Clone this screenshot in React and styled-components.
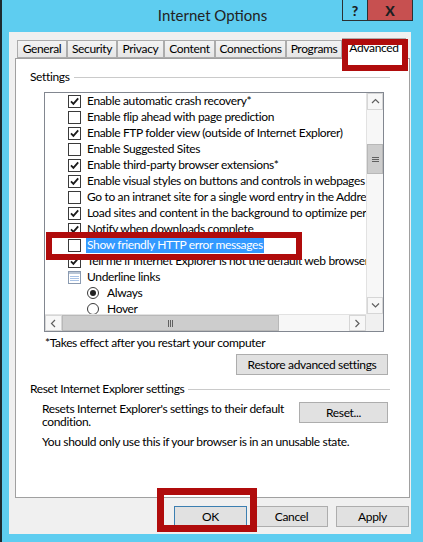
import styled, { createGlobalStyle } from "styled-components";

const FRAME_BLUE = "#5ecdf0";
const MARK_RED = "#b00c0c";
const UI_FONT = `Lato, "Liberation Sans", sans-serif`;

const GlobalStyle = createGlobalStyle`
  * {
    box-sizing: border-box;
  }

  html,
  body {
    margin: 0;
    padding: 0;
    background: ${FRAME_BLUE};
  }

  body {
    font-family: ${UI_FONT};
    font-size: 12px;
    letter-spacing: -0.35px;
    color: #000;
  }
`;

const Frame = styled.div`
  width: 423px;
  height: 542px;
  display: flex;
  flex-direction: column;
  background: ${FRAME_BLUE};
  border-left: 2px solid #1d2a30;
  overflow: hidden;
`;

const TitleBar = styled.div`
  flex: none;
  height: 32px;
  display: grid;
  grid-template-columns: 1fr auto 1fr;
`;

const Title = styled.div`
  grid-column: 2;
  align-self: center;
  margin-top: -2px;
  font-size: 15px;
  line-height: 20px;
  letter-spacing: 0;
  color: #222;
`;

const Caption = styled.div`
  grid-column: 3;
  justify-self: end;
  align-self: start;
  display: flex;
  height: 21px;
  margin-right: 10px;
  border: 1px solid #2b3033;
  border-top: 0;
`;

const CaptionButton = styled.div`
  width: ${(p) => p.$width}px;
  display: grid;
  place-items: center;
  background: ${(p) => p.$bg};
  font-weight: 900;
  font-size: 14px;
  letter-spacing: 0;
  color: #1b1f22;

  & + & {
    border-left: 1px solid #2b3033;
  }
`;

const Client = styled.div`
  flex: none;
  width: 402px;
  height: 502px;
  margin-left: 7px;
  padding: 6px 2px 0 6px;
  display: flex;
  flex-direction: column;
  background: #f0f0f0;
`;

const TabStrip = styled.div`
  position: relative;
  z-index: 1;
  height: 20px;
  padding-left: 2px;
  display: flex;
  align-items: flex-end;
`;

const Tab = styled.div`
  position: relative;
  flex: none;
  width: ${(p) => p.$width}px;
  height: ${(p) => (p.$active ? 21 : 18)}px;
  margin-bottom: ${(p) => (p.$active ? -1 : 0)}px;
  border: 1px solid #acacac;
  border-bottom: ${(p) => (p.$active ? "0" : "1px solid #acacac")};
  background: ${(p) => (p.$active ? "#fff" : "linear-gradient(#f3f3f3, #e6e6e6)")};
  text-align: center;
  line-height: ${(p) => (p.$active ? 18 : 16)}px;
  white-space: nowrap;
`;

const Marker = styled.span`
  position: absolute;
  z-index: 3;
  left: ${(p) => p.$left}px;
  top: ${(p) => p.$top}px;
  width: ${(p) => p.$w}px;
  height: ${(p) => p.$h}px;
  border: ${(p) => p.$thick}px solid ${MARK_RED};
  pointer-events: none;
`;

const Panel = styled.div`
  flex: none;
  width: 395px;
  height: 440px;
  padding: 10px 19px 0 14px;
  display: flex;
  flex-direction: column;
  background: #fff;
  border: 1px solid #a0a0a0;
`;

const GroupHeader = styled.div`
  display: flex;
  align-items: center;
  gap: 4px;
  height: 16px;
  margin-top: ${(p) => p.$gap || 0}px;
  line-height: 16px;

  &::after {
    content: "";
    flex: 1;
    height: 1px;
    background: #cacaca;
  }
`;

const ListBox = styled.div`
  width: 340px;
  height: 240px;
  margin: 7px 0 0 14px;
  display: grid;
  grid-template-columns: 1fr 17px;
  grid-template-rows: 1fr 17px;
  border: 1px solid #828790;
  overflow: hidden;
`;

const ListContent = styled.div`
  position: relative;
  overflow: hidden;
  background: #fff;
`;

const Row = styled.div`
  position: relative;
  display: flex;
  align-items: center;
  gap: ${(p) => p.$gap}px;
  height: 16px;
  padding-left: ${(p) => p.$indent}px;
  white-space: nowrap;
`;

const RowLabel = styled.span`
  padding: 0 1px;
  line-height: 16px;
  background: ${(p) => (p.$selected ? "#3399ff" : "transparent")};
  color: ${(p) => (p.$selected ? "#fff" : "#000")};
`;

const Box = styled.span`
  flex: none;
  width: 13px;
  height: 13px;
  display: grid;
  place-items: center;
  border: 1px solid #3a3a3a;
  background: #fff;
`;

const Radio = styled.span`
  flex: none;
  width: 12px;
  height: 12px;
  display: grid;
  place-items: center;
  border: 1px solid #3a3a3a;
  border-radius: 50%;
  background: #fff;

  &::after {
    content: "";
    width: 6px;
    height: 6px;
    border-radius: 50%;
    background: ${(p) => (p.$on ? "#222" : "transparent")};
  }
`;

const VScroll = styled.div`
  display: flex;
  flex-direction: column;
  background: #f7f7f7;
  border-left: 1px solid #e2e2e2;
`;

const HScroll = styled.div`
  display: flex;
  background: #f7f7f7;
  border-top: 1px solid #e2e2e2;
`;

const ArrowButton = styled.div`
  flex: none;
  width: ${(p) => (p.$horizontal ? "17px" : "auto")};
  height: ${(p) => (p.$horizontal ? "auto" : "17px")};
  margin-top: ${(p) => (p.$end && !p.$horizontal ? "auto" : "0")};
  margin-left: ${(p) => (p.$end && p.$horizontal ? "auto" : "0")};
  display: grid;
  place-items: center;
  border: 1px solid #d6d6d6;
  background: #f7f7f7;
`;

const Thumb = styled.div`
  flex: none;
  display: grid;
  place-items: center;
  background: #cdcdcd;
  border: 1px solid #b8b8b8;
  ${(p) =>
    p.$horizontal
      ? `width: ${p.$size}px; margin: 0;`
      : `height: ${p.$size}px; margin: ${p.$offset}px 0 0;`}
`;

const Corner = styled.div`
  background: #f0f0f0;
`;

const Note = styled.div`
  margin: 3px 0 0 15px;
  line-height: 16px;
`;

const Button = styled.div`
  position: relative;
  flex: none;
  width: ${(p) => p.$width}px;
  height: 21px;
  display: grid;
  place-items: center;
  background: #e1e1e1;
  border: 1px solid ${(p) => (p.$default ? "#3c7fb1" : "#adadad")};
  line-height: 16px;
`;

const RestoreButton = styled(Button)`
  align-self: flex-end;
  margin: 3px 2px 0 0;
`;

const ResetRow = styled.div`
  display: flex;
  justify-content: space-between;
  align-items: flex-start;
  margin: 4px 2px 0 12px;
`;

const Description = styled.div`
  line-height: 13px;
  padding-top: 1px;
  white-space: nowrap;
`;

const ResetButton = styled(Button)`
  margin-top: 1px;
`;

const Warning = styled.div`
  margin: 7px 0 0 12px;
  line-height: 14px;
`;

const ButtonRow = styled.div`
  display: flex;
  justify-content: flex-end;
  gap: 8px;
  margin-top: 8px;
`;

const settings = [
  { kind: "check", on: true, text: "Enable automatic crash recovery*" },
  { kind: "check", on: false, text: "Enable flip ahead with page prediction" },
  { kind: "check", on: true, text: "Enable FTP folder view (outside of Internet Explorer)" },
  { kind: "check", on: false, text: "Enable Suggested Sites" },
  { kind: "check", on: true, text: "Enable third-party browser extensions*" },
  { kind: "check", on: true, text: "Enable visual styles on buttons and controls in webpages" },
  { kind: "check", on: false, text: "Go to an intranet site for a single word entry in the Address bar" },
  { kind: "check", on: true, text: "Load sites and content in the background to optimize performance" },
  { kind: "check", on: true, text: "Notify when downloads complete" },
  { kind: "check", on: false, text: "Show friendly HTTP error messages", selected: true },
  { kind: "check", on: true, text: "Tell me if Internet Explorer is not the default web browser" },
  { kind: "group", text: "Underline links" },
  { kind: "radio", on: true, text: "Always" },
  { kind: "radio", on: false, text: "Hover" },
];

const tabs = [
  { label: "General", width: 50 },
  { label: "Security", width: 50 },
  { label: "Privacy", width: 47 },
  { label: "Content", width: 51 },
  { label: "Connections", width: 71 },
  { label: "Programs", width: 56 },
  { label: "Advanced", width: 64, active: true },
];

function CheckMark() {
  return (
    <svg width="11" height="11" viewBox="0 0 11 11">
      <path d="M2 5.4 4.4 7.9 9.2 2.4" fill="none" stroke="#1a1a1a" strokeWidth="1.8" />
    </svg>
  );
}

function GroupIcon() {
  return (
    <svg width="13" height="13" viewBox="0 0 13 13" style={{ flex: "none" }}>
      <rect x="0.5" y="0.5" width="12" height="12" fill="#fff" stroke="#8a9ab0" />
      <rect x="1" y="1" width="11" height="2" fill="#b9c6d6" />
      <path d="M2 5.5h9M2 7.5h9M2 9.5h9" stroke="#a9c3e6" />
    </svg>
  );
}

function Chevron({ dir }) {
  const paths = {
    up: "M1 5 4.5 1.5 8 5",
    down: "M1 1.5 4.5 5 8 1.5",
    left: "M5 1 1.5 4.5 5 8",
    right: "M1.5 1 5 4.5 1.5 8",
  };
  const vertical = dir === "up" || dir === "down";
  return (
    <svg width={vertical ? 9 : 7} height={vertical ? 7 : 9} viewBox={vertical ? "0 0 9 7" : "0 0 7 9"}>
      <path d={paths[dir]} fill="none" stroke="#5f5f5f" strokeWidth="1.2" />
    </svg>
  );
}

function Grip({ horizontal }) {
  return horizontal ? (
    <svg width="7" height="7" viewBox="0 0 7 7">
      <path d="M1.5 0v7M3.5 0v7M5.5 0v7" stroke="#606060" />
    </svg>
  ) : (
    <svg width="7" height="7" viewBox="0 0 7 7">
      <path d="M0 1.5h7M0 3.5h7M0 5.5h7" stroke="#606060" />
    </svg>
  );
}

function SettingRow({ item }) {
  if (item.kind === "radio") {
    return (
      <Row $indent={42} $gap={7}>
        <Radio $on={item.on} />
        <RowLabel>{item.text}</RowLabel>
      </Row>
    );
  }

  return (
    <Row $indent={23} $gap={5}>
      {item.kind === "group" ? <GroupIcon /> : <Box>{item.on ? <CheckMark /> : null}</Box>}
      <RowLabel $selected={item.selected}>{item.text}</RowLabel>
      {item.selected ? <Marker $left={1} $top={-5} $w={256} $h={28} $thick={6} /> : null}
    </Row>
  );
}

export default function App() {
  return (
    <>
      <GlobalStyle />
      <Frame>
        <TitleBar>
          <Title>Internet Options</Title>
          <Caption>
            <CaptionButton $width={24} $bg={FRAME_BLUE}>?</CaptionButton>
            <CaptionButton $width={45} $bg="#c75050">X</CaptionButton>
          </Caption>
        </TitleBar>

        <Client>
          <TabStrip>
            {tabs.map((tab) => (
              <Tab key={tab.label} $width={tab.width} $active={tab.active}>
                {tab.label}
                {tab.active ? <Marker $left={-1} $top={0} $w={66} $h={32} $thick={6} /> : null}
              </Tab>
            ))}
          </TabStrip>

          <Panel>
            <GroupHeader>Settings</GroupHeader>

            <ListBox>
              <ListContent>
                {settings.map((item) => (
                  <SettingRow key={item.text} item={item} />
                ))}
              </ListContent>
              <VScroll>
                <ArrowButton>
                  <Chevron dir="up" />
                </ArrowButton>
                <Thumb $size={30} $offset={34}>
                  <Grip />
                </Thumb>
                <ArrowButton $end>
                  <Chevron dir="down" />
                </ArrowButton>
              </VScroll>
              <HScroll>
                <ArrowButton $horizontal>
                  <Chevron dir="left" />
                </ArrowButton>
                <Thumb $horizontal $size={217}>
                  <Grip horizontal />
                </Thumb>
                <ArrowButton $horizontal $end>
                  <Chevron dir="right" />
                </ArrowButton>
              </HScroll>
              <Corner />
            </ListBox>

            <Note>*Takes effect after you restart your computer</Note>
            <RestoreButton $width={152}>Restore advanced settings</RestoreButton>

            <GroupHeader $gap={6}>Reset Internet Explorer settings</GroupHeader>
            <ResetRow>
              <Description>
                Resets Internet Explorer's settings to their default
                <br />
                condition.
              </Description>
              <ResetButton $width={89}>Reset...</ResetButton>
            </ResetRow>
            <Warning>You should only use this if your browser is in an unusable state.</Warning>
          </Panel>

          <ButtonRow>
            <Button $width={73} $default>
              OK
              <Marker $left={-18} $top={-19} $w={100} $h={44} $thick={7} />
            </Button>
            <Button $width={73}>Cancel</Button>
            <Button $width={73}>Apply</Button>
          </ButtonRow>
        </Client>
      </Frame>
    </>
  );
}
